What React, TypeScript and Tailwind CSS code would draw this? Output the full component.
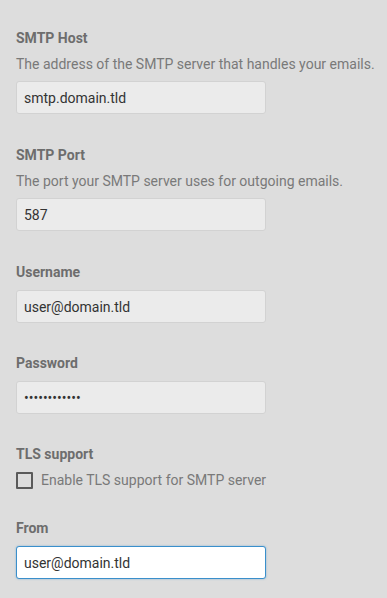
import { useState } from "react";

type FieldProps = {
  label: string;
  description?: string;
  value: string;
  type?: string;
  focused?: boolean;
  gap?: string;
};

function Field({ label, description, value, type = "text", focused, gap = "mb-[30px]" }: FieldProps) {
  return (
    <div className={gap}>
      <div className="h-5 mb-[6px] text-[14px] leading-5 font-bold text-[#6d6d6d]">{label}</div>
      {description ? (
        <p className="mb-[7px] text-[14px] leading-5 text-[#797979] whitespace-nowrap">{description}</p>
      ) : (
        <div className="h-[2px]" />
      )}
      <input
        type={type}
        defaultValue={value}
        className={
          "block w-[250px] h-[33px] px-[7px] rounded-[3px] border text-[14px] text-[#333] outline-none " +
          (focused
            ? "bg-white border-[#3a8fcb] shadow-[0_0_2px_rgba(58,143,203,0.6)]"
            : "bg-[#ebebeb] border-[#d2d2d2]")
        }
      />
    </div>
  );
}

export default function App() {
  const [tls, setTls] = useState(false);

  return (
    <div
      className="min-h-[598px] bg-[#dddddd] px-4 pt-7"
      style={{ fontFamily: "Roboto, 'Liberation Sans', sans-serif" }}
    >
      <Field
        label="SMTP Host"
        description="The address of the SMTP server that handles your emails."
        value="smtp.domain.tld"
        gap="mb-[31px]"
      />
      <Field
        label="SMTP Port"
        description="The port your SMTP server uses for outgoing emails."
        value="587"
        gap="mb-[31px]"
      />
      <Field label="Username" value="user@domain.tld" />
      <Field label="Password" value="password1234" type="password" />

      <div className="mb-[28px]">
        <div className="h-5 mb-[6px] text-[14px] leading-5 font-bold text-[#6d6d6d]">TLS support</div>
        <label className="flex items-center gap-2 h-5 mt-[2px] cursor-pointer">
          <span
            onClick={() => setTls(!tls)}
            className="flex items-center justify-center w-[17px] h-[17px] border-2 border-[#5a5a5a] rounded-[1px]"
          >
            {tls && <span className="w-[9px] h-[9px] bg-[#5a5a5a]" />}
          </span>
          <span className="text-[14px] leading-5 text-[#797979]">Enable TLS support for SMTP server</span>
        </label>
      </div>

      <Field label="From" value="user@domain.tld" focused />
    </div>
  );
}
